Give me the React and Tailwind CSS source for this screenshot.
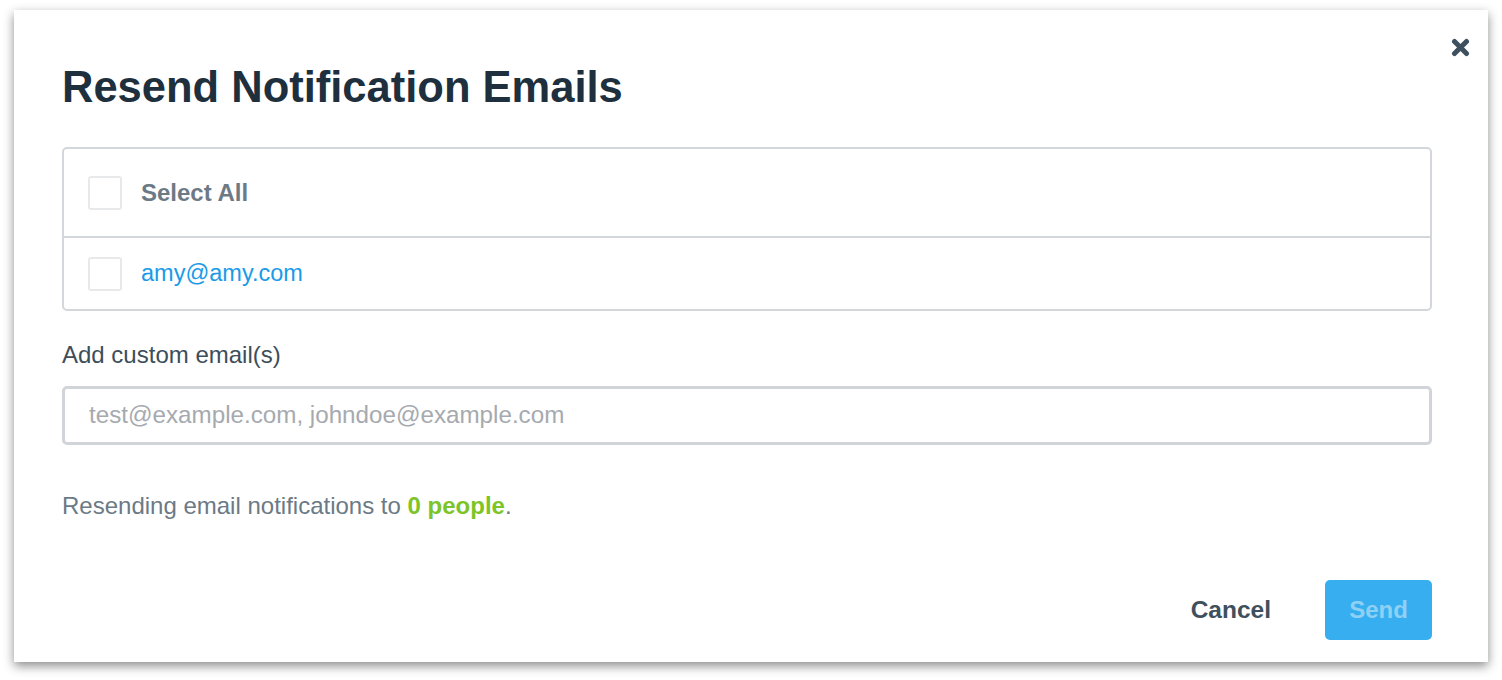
import React from "react";

export default function App() {
  return (
    <div
      className="w-[1502px] h-[680px] bg-white pt-[10px] pl-[14px]"
      style={{ fontFamily: '"Liberation Sans", Arial, sans-serif' }}
    >
      <div className="relative w-[1474px] h-[652px] bg-white shadow-[0_4px_10px_rgba(0,0,0,0.45)] pl-[48px] pr-[56px] pt-[56px] pb-[22px] flex flex-col">
        <button className="absolute top-[28px] right-[18px] w-[19px] h-[19px] flex items-center justify-center">
          <svg width="19" height="19" viewBox="0 0 19 19">
            <path d="M3.5 3.5 L15.5 15.5 M15.5 3.5 L3.5 15.5" stroke="#3e505e" strokeWidth="5" strokeLinecap="round" />
          </svg>
        </button>

        <h1 className="text-[43.5px] leading-[43px] font-bold text-[#1e2f3d]">
          Resend Notification Emails
        </h1>

        <div className="mt-[38px] border-2 border-[#d3d7db] rounded-[5px]">
          <div className="h-[89px] border-b-2 border-[#d3d7db] flex items-center pl-[24px]">
            <div className="w-[34px] h-[34px] border-2 border-[#e7e9eb] rounded-[3px]" />
            <span className="ml-[19px] text-[24px] font-bold text-[#6c7a86]">Select All</span>
          </div>
          <div className="h-[71px] flex items-center pl-[24px]">
            <div className="w-[34px] h-[34px] border-2 border-[#e7e9eb] rounded-[3px]" />
            <span className="ml-[19px] text-[23.5px] text-[#1a9be8]">amy@amy.com</span>
          </div>
        </div>

        <label className="mt-[32px] text-[24px] leading-[24px] text-[#3c4e5b]">
          Add custom email(s)
        </label>

        <div className="mt-[19px] h-[59px] border-[3px] border-[#d1d5d9] rounded-[5px] flex items-center pl-[24px]">
          <span className="text-[24.2px] text-[#a6aaaf]">test@example.com, johndoe@example.com</span>
        </div>

        <p className="mt-[49px] text-[24px] leading-[24px] text-[#6b7a85]">
          Resending email notifications to{" "}
          <span className="font-bold text-[#7cc427]">0 people</span>.
        </p>

        <div className="mt-auto flex items-center justify-end">
          <button className="text-[24.5px] font-bold text-[#3f505d] mr-[54px]">Cancel</button>
          <button className="w-[107px] h-[60px] rounded-[5px] bg-[#36aef0] text-[24px] font-bold text-[#8fd0f5]">
            Send
          </button>
        </div>
      </div>
    </div>
  );
}
